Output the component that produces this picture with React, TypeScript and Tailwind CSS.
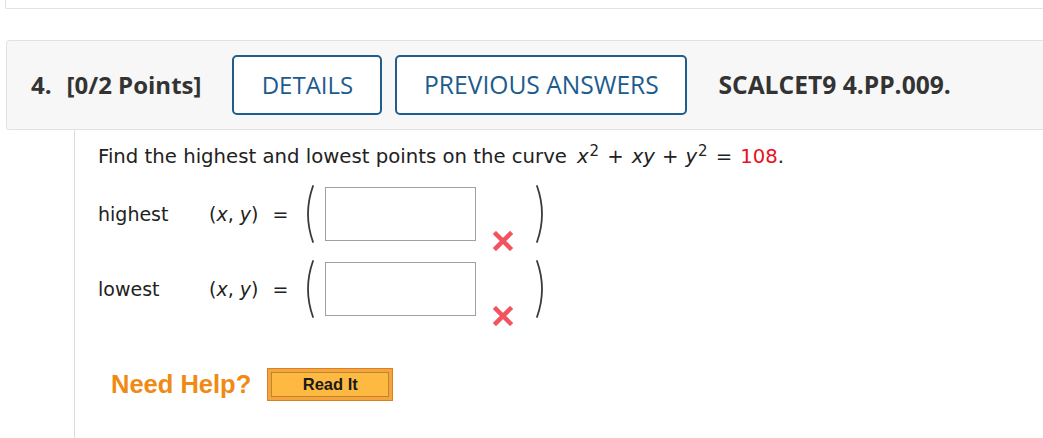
import { Fragment } from "react";

const sans = { fontFamily: '"Open Sans", "Liberation Sans", sans-serif' };
const verdana = { fontFamily: '"DejaVu Sans", Verdana, sans-serif' };
const arial = { fontFamily: '"Liberation Sans", Arial, sans-serif' };

function Paren({ side }: { side: "left" | "right" }) {
  const d = side === "left" ? "M11 1 Q1 29 11 57" : "M3 1 Q13 29 3 57";
  return (
    <svg width="14" height="58" viewBox="0 0 14 58" className="shrink-0">
      <path d={d} fill="none" stroke="#3a3a3a" strokeWidth="1.8" strokeLinecap="round" />
    </svg>
  );
}

function WrongMark() {
  return (
    <svg width="20" height="20" viewBox="0 0 20 20" className="shrink-0">
      <path d="M3 3 L17 17 M17 3 L3 17" stroke="#f3535e" strokeWidth="4.5" strokeLinecap="square" />
    </svg>
  );
}

function AnswerRow({ label }: { label: string }) {
  return (
    <div className="flex items-center h-[58px]">
      <span className="w-[111px] text-[19px] text-[#222]">{label}</span>
      <span className="text-[19px] text-[#222]">
        (<i>x</i>, <i>y</i>)
      </span>
      <span className="ml-[14px] mr-[14px] text-[19px] text-[#222]">=</span>
      <Paren side="left" />
      <div className="ml-[9px] w-[151px] h-[54px] border border-[#a0a0a0] bg-white" />
      <div className="ml-[17px] self-end mb-[-8px]">
        <WrongMark />
      </div>
      <div className="ml-[21px]">
        <Paren side="right" />
      </div>
    </div>
  );
}

export default function App() {
  const rows = ["highest", "lowest"];
  return (
    <div className="w-[1043px] h-[438px] overflow-hidden bg-white">
      {/* previous question card edge */}
      <div className="ml-[5px] h-[9px] border-l border-b border-[#e2e2e2] rounded-bl-[2px]" />

      {/* question header */}
      <div
        className="mt-[31px] ml-[6px] w-[1050px] h-[90px] flex items-center pl-[24px] bg-[#f7f7f7] border border-[#e2e2e2] rounded-[3px] text-[24px]"
        style={sans}
      >
        <span className="font-bold text-[#333]">4.</span>
        <span className="ml-[15px] font-bold text-[#333]">[0/2 Points]</span>
        <button
          type="button"
          className="ml-[31px] h-[60px] w-[150px] border-2 border-[#1e5e8e] rounded-[5px] bg-white text-[#1c5b8e]"
        >
          DETAILS
        </button>
        <button
          type="button"
          className="ml-[13px] h-[60px] w-[292px] border-2 border-[#1e5e8e] rounded-[5px] bg-white text-[24.6px] text-[#1c5b8e]"
        >
          PREVIOUS ANSWERS
        </button>
        <span className="ml-[31px] text-[24.6px] font-bold text-[#333]">SCALCET9 4.PP.009.</span>
      </div>

      {/* question body */}
      <div className="ml-[74px] h-[320px] border-l border-[#dcdcdc] pl-[23px] pt-[13px]" style={verdana}>
        <p className="text-[19.7px] text-[#222] leading-[28px]">
          Find the highest and lowest points on the curve
          <i className="ml-[10px]">x</i>
          <sup className="ml-[1px] text-[15px]">2</sup>
          <span className="mx-[8px]">+</span>
          <i>xy</i>
          <span className="mx-[7px]">+</span>
          <i>y</i>
          <sup className="ml-[1px] text-[15px]">2</sup>
          <span className="mx-[8px]">=</span>
          <span className="text-[#e8121f]">108</span>.
        </p>
        <div className="mt-[14px] flex flex-col gap-[17px]">
          {rows.map((r) => (
            <Fragment key={r}>
              <AnswerRow label={r} />
            </Fragment>
          ))}
        </div>

        <div className="mt-[47px] ml-[13px] flex items-center" style={arial}>
          <span className="text-[25.5px] font-bold text-[#f08a14]">Need Help?</span>
          <div className="ml-[16px] w-[126px] h-[33px] border border-[#d9802a] bg-[#f7a53a] p-[3px]">
            <div className="h-full border border-[#b98734] bg-[#fdb942] flex items-center justify-center text-[16.5px] font-bold text-[#1a1a1a]">
              Read It
            </div>
          </div>
        </div>
      </div>
    </div>
  );
}
